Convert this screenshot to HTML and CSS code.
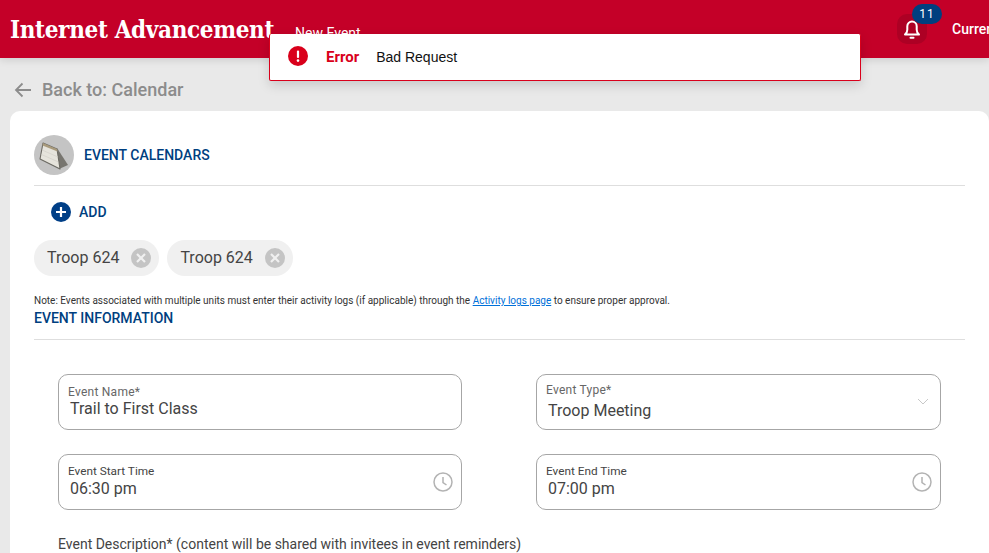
FILE: index.html
```html
<!DOCTYPE html>
<html lang="en">
<head>
<meta charset="utf-8">
<title>New Event</title>
<link rel="stylesheet" href="styles.css">
</head>
<body>
<header class="topbar">
  <h1 class="brand">Internet Advancement</h1>
  <span class="crumb">New Event</span>
  <div class="topbar-right">
    <div class="bell">
      <svg width="18" height="20" viewBox="0 0 18 20" fill="none" stroke="#fff" stroke-width="2"><path d="M2 15.500c1.400-1.300 2.300-2.600 2.300-4.800V7.200a4.700 4.700 0 0 1 9.400 0v3.500c0 2.200.9 3.500 2.300 4.800z" stroke-linejoin="round"/><path d="M7.500 18.800h3" stroke-linecap="round"/></svg>
      <span class="badge">11</span>
    </div>
    <span class="user">Current User</span>
  </div>
</header>

<div class="toast">
  <svg class="toast-icon" width="20" height="20" viewBox="0 0 20 20"><circle cx="10" cy="10" r="10" fill="#d9001b"/><rect x="8.900" y="4.500" width="2.200" height="7.500" rx="1" fill="#fff"/><circle cx="10" cy="14.600" r="1.300" fill="#fff"/></svg>
  <strong class="toast-title">Error</strong>
  <span class="toast-text">Bad Request</span>
</div>

<main class="page">
  <a class="back">
    <svg width="18" height="16" viewBox="0 0 18 16" fill="none" stroke="#8c8c8c" stroke-width="1.800"><path d="M17 8H2M8.500 1.500 2 8l6.500 6.500"/></svg>
    <span>Back to: Calendar</span>
  </a>
  <section class="card">
    <div class="section-head">
      <span class="avatar">
        <svg width="40" height="40" viewBox="0 0 40 40"><path d="M23 13 34 30 25 34z" fill="#77756f"/><path d="M9 8 23 14 26 34 6 24z" fill="#e6e4dc" stroke="#6b6962" stroke-width="1.100" stroke-linejoin="round"/><path d="M9 8 23 14 23.500 16.500 8.500 10.500z" fill="#a89a7c"/><path d="M8 15 24 22M7.500 19.500 24.500 27" stroke="#d2d0c8" stroke-width=".7"/></svg>
      </span>
      <h2 class="section-title">EVENT CALENDARS</h2>
    </div>
    <hr class="rule">
    <div class="add">
      <svg width="20" height="20" viewBox="0 0 20 20"><circle cx="10" cy="10" r="10" fill="#003f87"/><path d="M10 5v10M5 10h10" stroke="#fff" stroke-width="2.200"/></svg>
      <span>ADD</span>
    </div>
    <div class="chips">
      <span class="chip">Troop 624
        <svg width="20" height="20" viewBox="0 0 20 20"><circle cx="10" cy="10" r="10" fill="#c4c4c4"/><path d="M6 6l8 8M14 6l-8 8" stroke="#f0f0f0" stroke-width="2.200"/></svg>
      </span>
      <span class="chip">Troop 624
        <svg width="20" height="20" viewBox="0 0 20 20"><circle cx="10" cy="10" r="10" fill="#c4c4c4"/><path d="M6 6l8 8M14 6l-8 8" stroke="#f0f0f0" stroke-width="2.200"/></svg>
      </span>
    </div>
    <p class="note">Note: Events associated with multiple units must enter their activity logs (if applicable) through the <a class="note-link">Activity logs page</a> to ensure proper approval.</p>
    <h2 class="section-title info-title">EVENT INFORMATION</h2>
    <hr class="rule">
    <div class="form-grid">
      <div class="field field-name">
        <label class="label">Event Name*</label>
        <div class="value">Trail to First Class</div>
      </div>
      <div class="field field-type">
        <label class="label">Event Type*</label>
        <div class="value">Troop Meeting</div>
        <svg class="chev" width="12" height="7" viewBox="0 0 12 7" fill="none" stroke="#c8c8c8"><path d="M1 1l5 5 5-5"/></svg>
      </div>
      <div class="field field-time">
        <label class="label label-dark">Event Start Time</label>
        <div class="value">06:30 pm</div>
        <svg class="clock" width="20" height="20" viewBox="0 0 20 20" fill="none" stroke="#b3b3b3" stroke-width="1.500"><circle cx="10" cy="10" r="9"/><path d="M10 5v5.500l3.500 2.500"/></svg>
      </div>
      <div class="field field-time">
        <label class="label label-dark">Event End Time</label>
        <div class="value">07:00 pm</div>
        <svg class="clock" width="20" height="20" viewBox="0 0 20 20" fill="none" stroke="#b3b3b3" stroke-width="1.500"><circle cx="10" cy="10" r="9"/><path d="M10 5v5.500l3.500 2.500"/></svg>
      </div>
    </div>
    <p class="desc">Event Description* (content will be shared with invitees in event reminders)</p>
  </section>
</main>
</body>
</html>
```
FILE: styles.css
```css
* { box-sizing: border-box; }
html, body { margin: 0; height: 100%; overflow: hidden; }
body { background: #e9e9e9; font-family: Roboto, "Liberation Sans", sans-serif; color: #3f3f3f; width: 989px; height: 553px; position: relative; }

.topbar { height: 58px; background: #c40028; display: flex; align-items: center; padding-left: 10px; box-shadow: 0 2px 8px rgba(0,0,0,.12); overflow: hidden; }
.brand { margin: 0; font-family: "DejaVu Serif Condensed", "DejaVu Serif", serif; font-weight: 700; font-size: 24px; letter-spacing: -.35px; color: #fff; white-space: nowrap; width: 264px; }
.crumb { margin-left: 21px; font-size: 14px; color: #fff; position: relative; top: 4px; }
.topbar-right { margin-left: auto; display: flex; align-items: center; }
.bell { width: 30px; height: 30px; border-radius: 10px; background: #ad0024; display: flex; align-items: center; justify-content: center; position: relative; }
.badge { position: absolute; left: 15px; top: -10px; width: 30px; height: 20px; border-radius: 10px; background: #003f7f; color: #fff; font-size: 12px; display: flex; align-items: center; justify-content: center; letter-spacing: 1px; }
.user { margin-left: 25px; font-size: 14px; font-weight: 500; color: #fff; white-space: nowrap; width: 37px; overflow: hidden; }

.toast { position: absolute; left: 269px; top: 34px; width: 592px; height: 47px; background: #fff; border-bottom: 1px solid #d9001b; border-left: 1px solid #d9001b; border-right: 1px solid #d9001b; border-radius: 2px; box-shadow: 0 4px 12px rgba(0,0,0,.15); display: flex; align-items: center; padding-left: 18px; }
.toast-icon { position: relative; top: -1px; }
.toast-title { margin-left: 18px; font-size: 15px; font-weight: 700; color: #d9001b; }
.toast-text { margin-left: 17px; font-size: 14px; color: #111; font-family: "Liberation Sans", sans-serif; }

.page { padding-left: 10px; }
.back { display: flex; align-items: center; gap: 10px; height: 53px; padding: 10px 0 0 4px; color: #8c8c8c; font-weight: 500; font-size: 18px; }
.card { background: #fff; border-radius: 10px 10px 0 0; padding: 24px 24px 0; height: 442px; }
.section-head { display: flex; align-items: center; gap: 10px; height: 40px; }
.avatar { width: 40px; height: 40px; border-radius: 50%; background: #c4c4c4; display: flex; align-items: center; justify-content: center; }
.section-title { margin: 0; font-size: 14px; font-weight: 500; color: #003f7f; }
.rule { margin: 0; border: 0; border-top: 1px solid #dedede; }
.section-head + .rule { margin-top: 10px; }
.add { display: flex; align-items: center; gap: 8px; margin: 16px 0 0 17px; font-size: 14px; font-weight: 500; color: #003f7f; }
.chips { display: flex; gap: 8px; margin-top: 18px; }
.chip { height: 36px; border-radius: 18px; background: #f0f0f0; display: flex; align-items: center; gap: 12px; padding: 0 8px 1px 13px; font-size: 16px; color: #444; }
.chip svg { position: relative; top: .5px; }
.note { margin: 18px 0 0; font-size: 10px; line-height: 14px; color: #333; }
.note-link { color: #0070d9; text-decoration: underline; }
.info-title { margin-top: 2px; }
.info-title + .rule { margin-top: 13px; }
.form-grid { display: grid; grid-template-columns: 404px 405px; column-gap: 74px; row-gap: 24px; margin: 34px 0 0 24px; }
.field { height: 56px; border: 1px solid #a6a6a6; border-radius: 10px; position: relative; padding: 9px 9px 0; }
.label { display: block; font-size: 12px; line-height: 14px; color: #666; letter-spacing: .25px; }
.label-dark { color: #444; font-size: 11.800px; letter-spacing: 0; }
.value { font-size: 16px; line-height: 20px; color: #444; padding-left: 2px; }
.field-name { padding-top: 10px; }
.field-type .label { margin-top: -1px; }
.field-type .value { margin-top: 4px; }
.field-time .value { margin-top: 1px; }
.chev { position: absolute; right: 11px; top: 23px; }
.clock { position: absolute; right: 8px; top: 17px; }
.desc { margin: 25px 0 0 24px; font-size: 14px; line-height: 18px; color: #444; }
```
